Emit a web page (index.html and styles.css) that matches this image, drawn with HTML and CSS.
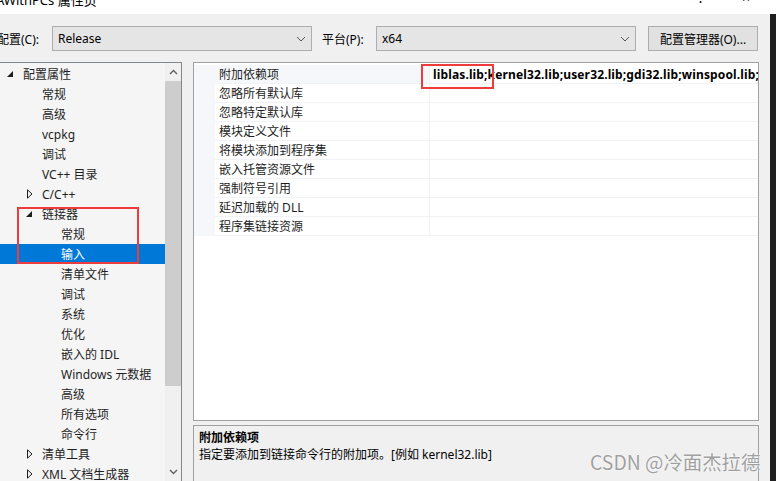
FILE: index.html
```html
<!DOCTYPE html>
<html lang="zh">
<head>
<meta charset="utf-8">
<link rel="stylesheet" href="styles.css">
</head>
<body>
<div class="screen">
  <div class="titlebar">
    <span class="title">AWithPCs 属性页</span>
    <span class="tb-btn help">?</span>
    <span class="tb-btn close">×</span>
  </div>
  <div class="main">
    <div class="dialog">
      <div class="config-row">
        <span class="lbl first">配置(C):</span>
        <div class="combo"><span>Release</span>
          <svg class="chev" width="10" height="6" viewBox="0 0 10 6"><path d="M1 1 L5 5 L9 1" fill="none" stroke="#555" stroke-width="1"/></svg>
        </div>
        <span class="lbl second">平台(P):</span>
        <div class="combo"><span>x64</span>
          <svg class="chev" width="10" height="6" viewBox="0 0 10 6"><path d="M1 1 L5 5 L9 1" fill="none" stroke="#555" stroke-width="1"/></svg>
        </div>
        <div class="btn">配置管理器(O)...</div>
      </div>
      <div class="panes">
        <div class="tree">
          <div class="tree-list">
            <div class="ti l0"><svg class="exp" width="7" height="7" viewBox="0 0 7 7"><path d="M6 0 L6 6 L0 6 Z" fill="#1e1e1e"/></svg>配置属性</div>
            <div class="ti l1">常规</div>
            <div class="ti l1">高级</div>
            <div class="ti l1">vcpkg</div>
            <div class="ti l1">调试</div>
            <div class="ti l1">VC++ 目录</div>
            <div class="ti l1"><svg class="col" width="6" height="10" viewBox="0 0 6 10"><path d="M0.5 0.8 L5 5 L0.5 9.2 Z" fill="none" stroke="#1e1e1e" stroke-width="1"/></svg>C/C++</div>
            <div class="ti l1"><svg class="exp2" width="7" height="7" viewBox="0 0 7 7"><path d="M6 0 L6 6 L0 6 Z" fill="#1e1e1e"/></svg>链接器</div>
            <div class="ti l2">常规</div>
            <div class="ti l2 sel">输入</div>
            <div class="ti l2">清单文件</div>
            <div class="ti l2">调试</div>
            <div class="ti l2">系统</div>
            <div class="ti l2">优化</div>
            <div class="ti l2">嵌入的 IDL</div>
            <div class="ti l2">Windows 元数据</div>
            <div class="ti l2">高级</div>
            <div class="ti l2">所有选项</div>
            <div class="ti l2">命令行</div>
            <div class="ti l1"><svg class="col" width="6" height="10" viewBox="0 0 6 10"><path d="M0.5 0.8 L5 5 L0.5 9.2 Z" fill="none" stroke="#1e1e1e" stroke-width="1"/></svg>清单工具</div>
            <div class="ti l1"><svg class="col" width="6" height="10" viewBox="0 0 6 10"><path d="M0.5 0.8 L5 5 L0.5 9.2 Z" fill="none" stroke="#1e1e1e" stroke-width="1"/></svg>XML 文档生成器</div>
          </div>
          <div class="vscroll">
            <div class="sarrow"><svg width="9" height="6" viewBox="0 0 9 6"><path d="M1 5 L4.5 1.5 L8 5" fill="none" stroke="#606060" stroke-width="1.4"/></svg></div>
            <div class="thumb"></div>
            <div class="strack"></div>
            <div class="sarrow"><svg width="9" height="6" viewBox="0 0 9 6"><path d="M1 1 L4.5 4.5 L8 1" fill="none" stroke="#606060" stroke-width="1.4"/></svg></div>
          </div>
          <div class="redbox tree-box"></div>
        </div>
        <div class="rightcol">
          <div class="grid">
            <div class="rows">
              <div class="row first"><div class="gut"></div><div class="name">附加依赖项</div><div class="val">liblas.lib;kernel32.lib;user32.lib;gdi32.lib;winspool.lib;</div></div>
              <div class="row"><div class="gut"></div><div class="name">忽略所有默认库</div><div class="val"></div></div>
              <div class="row"><div class="gut"></div><div class="name">忽略特定默认库</div><div class="val"></div></div>
              <div class="row"><div class="gut"></div><div class="name">模块定义文件</div><div class="val"></div></div>
              <div class="row"><div class="gut"></div><div class="name">将模块添加到程序集</div><div class="val"></div></div>
              <div class="row"><div class="gut"></div><div class="name">嵌入托管资源文件</div><div class="val"></div></div>
              <div class="row"><div class="gut"></div><div class="name">强制符号引用</div><div class="val"></div></div>
              <div class="row"><div class="gut"></div><div class="name">延迟加载的 DLL</div><div class="val"></div></div>
              <div class="row"><div class="gut"></div><div class="name">程序集链接资源</div><div class="val"></div></div>
            </div>
            <div class="redbox val-box"></div>
          </div>
          <div class="desc">
            <div class="desc-title">附加依赖项</div>
            <div class="desc-text">指定要添加到链接命令行的附加项。[例如 kernel32.lib]</div>
          </div>
        </div>
      </div>
    </div>
    <div class="edge"></div>
  </div>
  <div class="watermark">CSDN @冷面杰拉德</div>
</div>
</body>
</html>
```
FILE: styles.css
```css
* { box-sizing: border-box; }
html, body { margin: 0; padding: 0; }
body {
  background: #f0f0f0;
  font-family: "Noto Sans", "Noto Sans CJK SC", sans-serif;
  font-size: 12px;
  color: #1e1e1e;
}
.screen {
  position: relative;
  width: 776px;
  height: 481px;
  overflow: hidden;
  display: flex;
  flex-direction: column;
}
.titlebar {
  height: 14px;
  flex: none;
  background: #ffffff;
  overflow: hidden;
  display: flex;
  align-items: flex-start;
}
.title {
  font-size: 13px;
  line-height: 14px;
  margin-top: -7px;
  margin-left: -4px;
  color: #000;
  white-space: nowrap;
}
.tb-btn {
  font-size: 14px;
  line-height: 14px;
  margin-top: -9px;
  color: #000;
}
.tb-btn.help { margin-left: auto; margin-right: 38px; }
.tb-btn.close { margin-right: 26px; }
.main {
  flex: 1;
  display: flex;
  min-height: 0;
}
.dialog {
  width: 770px;
  flex: none;
  display: flex;
  flex-direction: column;
  min-height: 0;
}
.edge {
  flex: 1;
  background: #1f1f1f;
}
.config-row {
  margin-top: 12px;
  height: 25px;
  display: flex;
  align-items: center;
  flex: none;
}
.lbl { color: #000; white-space: nowrap; flex: none; }
.lbl.first { width: 55px; margin-left: -3px; }
.lbl.second { width: 54px; margin-left: 10px; }
.combo {
  width: 260px;
  height: 25px;
  flex: none;
  background: #e5e5e5;
  border: 1px solid #adadad;
  display: flex;
  align-items: center;
  padding-left: 5px;
  padding-right: 5px;
  color: #000;
}
.combo span { flex: 1; }
.chev { flex: none; }
.btn {
  margin-left: 12px;
  width: 110px;
  height: 25px;
  flex: none;
  background: #e1e1e1;
  border: 1px solid #adadad;
  display: flex;
  align-items: center;
  justify-content: center;
  color: #000;
}
.panes {
  margin-top: 11px;
  flex: 1;
  display: flex;
  min-height: 0;
}
.tree {
  position: relative;
  width: 182px;
  flex: none;
  background: #f5f5f5;
  border-top: 1px solid #828790;
  border-right: 1px solid #828790;
  display: flex;
  overflow: hidden;
}
.tree-list {
  width: 165px;
  flex: none;
  padding-top: 1px;
}
.ti {
  height: 20px;
  line-height: 21px;
  white-space: nowrap;
  position: relative;
  color: #1e1e1e;
}
.ti.l0 { padding-left: 23px; }
.ti.l1 { padding-left: 42px; }
.ti.l2 { padding-left: 61px; }
.ti.sel { background: #0078d7; color: #ffffff; }
.ti svg { position: absolute; }
.exp { left: 7px; top: 7px; }
.exp2 { left: 26px; top: 7px; }
.col { left: 27px; top: 5px; }
.vscroll {
  width: 16px;
  flex: none;
  background: #f0f0f0;
  display: flex;
  flex-direction: column;
}
.sarrow {
  height: 18px;
  flex: none;
  display: flex;
  align-items: center;
  justify-content: center;
}
.thumb {
  height: 305px;
  flex: none;
  background: #cdcdcd;
}
.strack { flex: 1; }
.rightcol {
  margin-left: 11px;
  width: 566px;
  flex: none;
  display: flex;
  flex-direction: column;
  min-height: 0;
}
.grid {
  position: relative;
  height: 359px;
  flex: none;
  background: #ffffff;
  border: 1px solid #a0a0a0;
  padding-top: 2px;
}
.row {
  height: 19px;
  display: flex;
}
.row .gut {
  width: 21px;
  flex: none;
  background: #f5f7fa;
}
.row .name {
  width: 215px;
  flex: none;
  padding-left: 4px;
  line-height: 19px;
  color: #1e1e1e;
  border-right: 1px solid #f0f2f6;
  border-bottom: 1px solid #f0f2f6;
}
.row .val {
  flex: 1;
  padding-left: 3px;
  line-height: 19px;
  white-space: nowrap;
  overflow: hidden;
  font-weight: bold;
  letter-spacing: 0.14px;
  color: #000;
  border-bottom: 1px solid #f0f2f6;
}
.row.first .name { background: #f5f7fa; }
.desc {
  margin-top: 4px;
  flex: 1;
  border: 1px solid #a0a0a0;
  border-bottom: none;
  background: #f0f0f0;
  padding: 3px 5px;
}
.desc-title {
  font-weight: bold;
  line-height: 17px;
  color: #000;
}
.desc-text {
  line-height: 17px;
  color: #000;
}
.redbox {
  position: absolute;
  border: 2px solid #ee3b3b;
  pointer-events: none;
}
.tree-box { left: 17px; top: 144px; width: 122px; height: 57px; }
.val-box { left: 227px; top: 1px; width: 73px; height: 25px; }
.watermark {
  position: absolute;
  left: 590px;
  top: 447px;
  font-family: "Noto Sans CJK SC", "Noto Sans", sans-serif;
  font-size: 19.4px;
  color: #a0a0a0;
  text-shadow: 0 0 2px #ffffff, 0 0 1px #ffffff;
  white-space: nowrap;
}
```
